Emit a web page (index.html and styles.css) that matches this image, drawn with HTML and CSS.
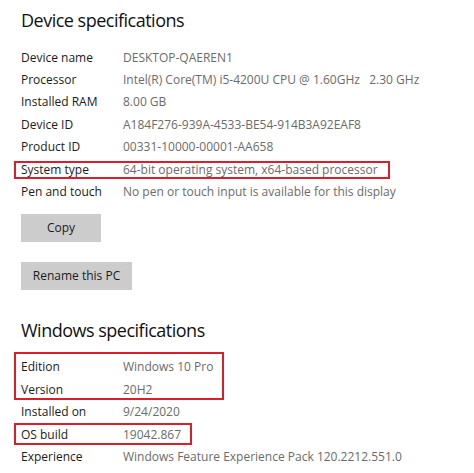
FILE: index.html
```html
<!DOCTYPE html>
<html>
<head>
<meta charset="utf-8">
<link rel="stylesheet" href="styles.css">
</head>
<body>
<div class="page">
  <h2 class="title">Device specifications</h2>
  <div class="specs">
    <div class="row"><span class="label">Device name</span><span class="value">DESKTOP-QAEREN1</span></div>
    <div class="row"><span class="label">Processor</span><span class="value">Intel(R) Core(TM) i5-4200U CPU @ 1.60GHz&nbsp;&nbsp;&nbsp;2.30 GHz</span></div>
    <div class="row"><span class="label">Installed RAM</span><span class="value">8.00 GB</span></div>
    <div class="row"><span class="label">Device ID</span><span class="value">A184F276-939A-4533-BE54-914B3A92EAF8</span></div>
    <div class="row"><span class="label">Product ID</span><span class="value">00331-10000-00001-AA658</span></div>
    <div class="hl hl-sys"><div class="row"><span class="label">System type</span><span class="value">64-bit operating system, x64-based processor</span></div></div>
    <div class="row"><span class="label">Pen and touch</span><span class="value">No pen or touch input is available for this display</span></div>
  </div>
  <button class="btn btn-copy">Copy</button>
  <button class="btn btn-rename">Rename this PC</button>
  <h2 class="title title-win">Windows specifications</h2>
  <div class="specs">
    <div class="hl hl-ed">
      <div class="row"><span class="label">Edition</span><span class="value">Windows 10 Pro</span></div>
      <div class="row"><span class="label">Version</span><span class="value">20H2</span></div>
    </div>
    <div class="row"><span class="label">Installed on</span><span class="value">9/24/2020</span></div>
    <div class="hl hl-os"><div class="row"><span class="label">OS build</span><span class="value">19042.867</span></div></div>
    <div class="row"><span class="label">Experience</span><span class="value">Windows Feature Experience Pack 120.2212.551.0</span></div>
  </div>
</div>
</body>
</html>
```
FILE: styles.css
```css
html, body {
  margin: 0;
  padding: 0;
  background: #ffffff;
}
body {
  font-family: "Open Sans", "Noto Sans", sans-serif;
  color: #1b1b1b;
}
.page {
  padding: 6px 0 0 21px;
  display: flex;
  flex-direction: column;
  align-items: flex-start;
}
.title {
  margin: 0;
  font-size: 18px;
  font-weight: 400;
  line-height: 28px;
  color: #111;
  letter-spacing: -0.5px;
}
.title-win {
  margin-top: 26px;
}
.specs {
  margin-top: 12.5px;
  display: flex;
  flex-direction: column;
  align-items: flex-start;
}
.row {
  display: grid;
  grid-template-columns: 102px auto;
  line-height: 22.4px;
  font-size: 12px;
  white-space: nowrap;
}
.label {
  color: #1b1b1b;
}
.value {
  color: #6b6b6b;
}
.hl {
  position: relative;
}
.hl::after {
  content: "";
  position: absolute;
  left: -7px;
  right: -12px;
  border: 2px solid #d91f2c;
  pointer-events: none;
}
.hl-sys::after { top: 2px; bottom: 2px; }
.hl-ed::after { top: -4px; bottom: 1px; right: -11px; }
.hl-os::after { top: -0.5px; bottom: 1px; right: -11px; }
.btn {
  font-family: inherit;
  font-size: 12px;
  color: #1b1b1b;
  background: #cccccc;
  border: none;
  padding: 0;
  height: 28px;
  margin: 0;
}
.btn-copy {
  width: 80px;
  margin-top: 10.5px;
}
.btn-rename {
  width: 111px;
  margin-top: 20px;
}
```
